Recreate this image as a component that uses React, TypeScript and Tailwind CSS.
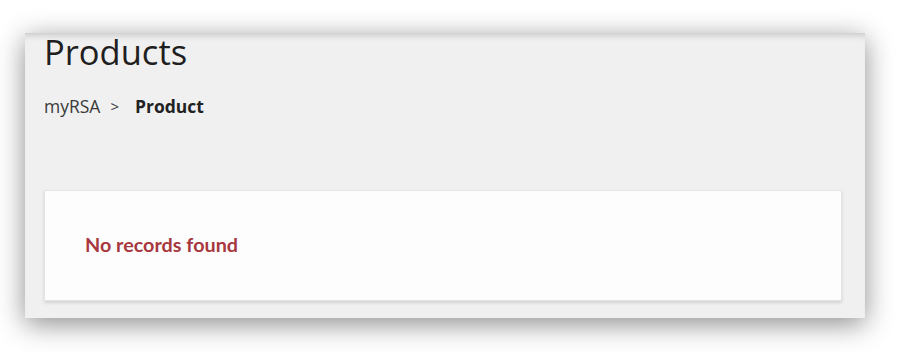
import React from 'react';

export default function App() {
  return (
    <div className="w-[900px] h-[354px] bg-white pt-[33px] pl-[25px]" style={{ fontFamily: '"Open Sans", sans-serif' }}>
      {/* Window panel */}
      <div className="w-[840px] h-[285px] bg-[#f0f0f0] flex flex-col shadow-[0_6px_26px_rgba(0,0,0,0.45),inset_0_7px_7px_-5px_rgba(0,0,0,0.18)]">
        <div className="pl-[19px]">
          <h1 className="text-[34.5px] leading-[40px] text-[#1f1f1f] font-normal -mt-[1px]">Products</h1>
          <div className="mt-[22px] flex items-center text-[17.5px] leading-[24px] text-[#3a3a3a]">
            <span>myRSA</span>
            <span className="ml-[10px] text-[15px]">&gt;</span>
            <span className="ml-[16px] font-bold text-[#222]">Product</span>
          </div>
        </div>

        {/* Results card */}
        <div className="ml-[19px] mt-[72px] w-[798px] h-[111px] bg-[#fdfdfe] border border-[#e4e4e4] shadow-[0_2px_3px_rgba(0,0,0,0.12)] flex items-center pl-[40px]">
          <p className="text-[19.8px] font-bold text-[#a8383f] -mt-[2px]" style={{ fontFamily: 'Lato, sans-serif' }}>
            No records found
          </p>
        </div>
      </div>
    </div>
  );
}
